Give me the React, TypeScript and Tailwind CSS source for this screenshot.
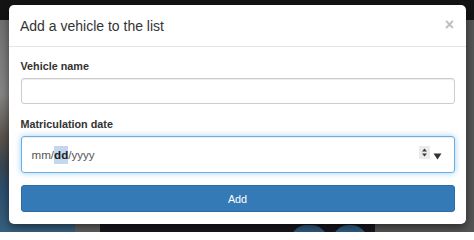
import React from "react"

const font = { fontFamily: '"Liberation Sans", Arial, sans-serif' }

const Backdrop = () => (
  <div className="flex h-full w-full flex-col">
    <div className="h-[20px] bg-[#141414]" />
    <div className="flex flex-1">
      <div className="w-[75px] bg-[linear-gradient(180deg,#707070_0%,#858585_35%,#5a534c_55%,#3a4650_68%,#2d4e6e_80%,#37607f_100%)]" />
      <div className="w-[25px] bg-[#5f5f5f]" />
      <div className="flex w-[275px] flex-col">
        <div className="flex-1 bg-[#5a5a5a]" />
        <div className="flex h-[9px] gap-[4px] bg-[#17161d] pl-[190px]">
          <div className="mt-[2px] h-[34px] w-[38px] rounded-full bg-[#2d587d]" />
          <div className="mt-[2px] h-[34px] w-[36px] rounded-full bg-[#2f5b80]" />
        </div>
      </div>
      <div className="flex-1 bg-[#545454]" />
    </div>
  </div>
)

const SpinIcon = () => (
  <svg width="11" height="13" viewBox="0 0 11 13" className="bg-[#ebebeb]">
    <path d="M3 5.5 L5.5 2.5 L8 5.5 Z" fill="#3a3a3a" />
    <path d="M3 7.5 L5.5 10.5 L8 7.5 Z" fill="#3a3a3a" />
  </svg>
)

const DropIcon = () => (
  <svg width="9" height="7" viewBox="0 0 9 7">
    <path d="M0.5 0.5 H8.5 L4.5 6.5 Z" fill="#333" />
  </svg>
)

export default function App() {
  return (
    <div className="relative h-[232px] w-[474px] overflow-hidden" style={font}>
      <Backdrop />
      <div className="absolute left-[9px] top-[5px] w-[457px] rounded-[5px] bg-white text-[#333] shadow-[0_3px_9px_rgba(0,0,0,0.5)]">
        <div className="flex h-[42px] items-center justify-between border-b border-[#e5e5e5] pl-[11px] pr-[12px]">
          <h4 className="text-[14px] leading-[20px]">Add a vehicle to the list</h4>
          <button className="mb-[2px] text-[16px] font-bold leading-none text-[#bdbdbd]">×</button>
        </div>
        <div className="px-[11.5px] pb-[11.5px] pt-[11.5px]">
          <div className="mb-[13px]">
            <label className="mb-[4px] block text-[10.8px] font-bold leading-[15.4px]">Vehicle name</label>
            <input
              type="text"
              className="block h-[26px] w-full rounded-[3px] border border-[#ccc] px-[9px] text-[10.8px] shadow-[inset_0_1px_1px_rgba(0,0,0,0.075)] outline-none"
            />
          </div>
          <div className="mb-[12px]">
            <label className="mb-[4px] block text-[10.8px] font-bold leading-[15.4px]">Matriculation date</label>
            <div className="flex h-[37px] w-full items-center rounded-[3px] border border-[#66afe9] pl-[10px] pr-[12px] text-[11.6px] shadow-[inset_0_1px_1px_rgba(0,0,0,0.075),0_0_6px_rgba(102,175,233,0.6)]">
              <span className="text-[#555]">mm/</span>
              <span className="bg-[#c3d8ef] font-bold text-[#222]">dd</span>
              <span className="text-[#555]">/yyyy</span>
              <div className="ml-auto flex items-center gap-[3px]">
                <div className="mb-[5px]">
                  <SpinIcon />
                </div>
                <div className="mt-[4px]">
                  <DropIcon />
                </div>
              </div>
            </div>
          </div>
          <button className="block h-[27px] w-full rounded-[3px] border border-[#2e6da4] bg-[#337ab7] text-[10.8px] text-white">
            Add
          </button>
        </div>
      </div>
    </div>
  )
}
